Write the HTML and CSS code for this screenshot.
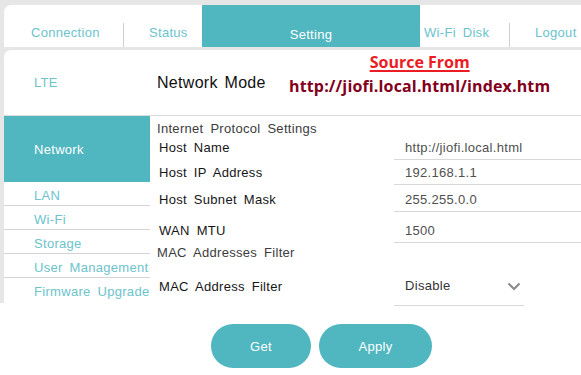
FILE: index.html
```html
<!DOCTYPE html>
<html>
<head>
	<title>JioFi - Network Settings</title>
<link rel="stylesheet" href="styles.css">
</head>
<body>

<div class="top">
	<ul class="nav">
		<li class="nav-conn">Connection</li>
		<li class="sep"></li>
		<li class="nav-status">Status</li>
		<li class="nav-setting">Setting</li>
		<li class="nav-disk">Wi-Fi Disk</li>
		<li class="sep"></li>
		<li class="nav-logout">Logout</li>
	</ul>

	<div class="mode-row">
		<div class="side-head">LTE</div>
		<div class="mode-title">Network Mode</div>
		<div class="source">
			<div class="source-label">Source From</div>
			<div class="source-url">http://jiofi.local.html/index.htm</div>
		</div>
	</div>
</div>

<div class="main">
	<ul class="side">
		<li class="active">Network</li>
		<li>LAN</li>
		<li>Wi-Fi</li>
		<li>Storage</li>
		<li>User Management</li>
		<li class="last">Firmware Upgrade</li>
	</ul>

	<div class="form">
		<div class="group-title">Internet Protocol Settings</div>
		<div class="field">
			<span class="label">Host Name</span>
			<span class="value">http://jiofi.local.html</span>
		</div>
		<div class="field gap-5">
			<span class="label">Host IP Address</span>
			<span class="value">192.168.1.1</span>
		</div>
		<div class="field gap-7">
			<span class="label">Host Subnet Mask</span>
			<span class="value">255.255.0.0</span>
		</div>
		<div class="field gap-11">
			<span class="label">WAN MTU</span>
			<span class="value">1500</span>
		</div>

		<div class="group-title group-mac">MAC Addresses Filter</div>
		<div class="field gap-18">
			<span class="label">MAC Address Filter</span>
			<span class="value select">
				<span>Disable</span>
				<svg width="14" height="9" viewBox="0 0 14 9"><path d="M1.5 1.5 L7 7 L12.5 1.5" fill="none" stroke="#8c8c8c" stroke-width="2.2"/></svg>
			</span>
		</div>
	</div>
</div>

<div class="actions">
	<button class="btn btn-get">Get</button>
	<button class="btn btn-apply">Apply</button>
</div>

</body>
</html>
```

FILE: styles.css
```css
body {
	margin: 0;
	background-color: #ffffff;
	font-family: "Liberation Sans", Arial, sans-serif;
	font-size: 13px;
	letter-spacing: 0.3px;
	word-spacing: 3px;
	color: #1c1c1c;
}

ul {
	margin: 0;
	padding: 0;
	list-style: none;
}

.top {
	background-color: #e6e6e6;
	padding: 5px 0 0 4px;
}

/* top tabs */
.nav {
	display: flex;
	height: 42px;
	background-color: #ffffff;
	border-top-left-radius: 7px;
	color: #6cc3cc;
}
.nav li {
	padding-top: 20px;
	line-height: 16px;
	white-space: nowrap;
}
.nav .sep {
	align-self: flex-end;
	width: 1px;
	height: 24px;
	padding: 0;
	background-color: #cfcfcf;
}
.nav-conn {
	width: 92px;
	padding-left: 27px;
}
.nav-status {
	width: 53px;
	padding-left: 25px;
}
.nav-setting {
	width: 218px;
	padding-top: 22px !important;
	text-align: center;
	background-color: #50b6c0;
	color: #ffffff;
}
.nav-disk {
	width: 85px;
	padding-left: 4px;
}
.nav-logout {
	flex: 1;
	padding-left: 25px;
}

/* network mode header */
.mode-row {
	display: flex;
	align-items: center;
	height: 65px;
	margin-top: 3px;
	background-color: #ffffff;
	border-top-left-radius: 7px;
	border-bottom: 1px solid #dcdcdc;
}
.side-head {
	width: 116px;
	padding-left: 30px;
	line-height: 16px;
	color: #6cc3cc;
}
.mode-title {
	width: 132px;
	padding-left: 7px;
	font-size: 16px;
	line-height: 18px;
	color: #111111;
	word-spacing: 2px;
}
.source {
	align-self: flex-start;
	margin-top: 2px;
	text-align: center;
	font-family: "Open Sans", "DejaVu Sans", sans-serif;
	font-weight: bold;
	font-size: 16px;
	line-height: 20px;
	letter-spacing: 0;
	word-spacing: 0;
}
.source-label {
	color: #ec1c24;
	text-decoration: underline;
	text-decoration-thickness: 2px;
	text-underline-offset: 2px;
}
.source-url {
	margin-top: 4px;
	color: #82001c;
	letter-spacing: 0.15px;
}

/* left menu + form */
.main {
	display: flex;
	align-items: flex-start;
}

.side {
	width: 146px;
	border-left: 4px solid #e6e6e6;
	color: #6cc3cc;
}
.side li {
	padding: 6px 0 1px 30px;
	line-height: 16px;
	white-space: nowrap;
	border-bottom: 1px solid #d4d4d4;
}
.side li.active {
	display: flex;
	align-items: center;
	height: 65px;
	padding-top: 1px;
	padding-bottom: 0;
	border-bottom: none;
	background-color: #50b6c0;
	color: #ffffff;
}
.side li.last {
	padding-bottom: 3px;
	border-bottom: none;
}

.form {
	flex: 1;
	padding-left: 7px;
}
.group-title {
	padding-top: 5px;
	line-height: 16px;
	color: #3c3c3c;
}
.group-mac {
	padding-top: 2px;
}

.field {
	display: flex;
	padding-top: 3px;
	line-height: 16px;
}
.field.gap-5 { padding-top: 5px; }
.field.gap-7 { padding-top: 7px; }
.field.gap-11 { padding-top: 11px; }
.field.gap-18 { padding-top: 18px; }

.label {
	width: 235px;
	padding-left: 2px;
	color: #161616;
}
.value {
	flex: 1;
	padding: 0 0 3px 11px;
	border-bottom: 1px solid #d8d8d8;
	color: #505050;
}
.value.select {
	flex: none;
	display: flex;
	justify-content: space-between;
	align-items: center;
	width: 116px;
	margin-top: -1px;
	padding: 0 3px 11px 11px;
	color: #333333;
}

/* buttons */
.actions {
	display: flex;
	gap: 8px;
	padding: 18px 0 0 211px;
}
.btn {
	height: 44px;
	border: none;
	border-radius: 22px;
	background-color: #50b6c0;
	color: #ffffff;
	font-family: "Liberation Sans", Arial, sans-serif;
	font-size: 13px;
	letter-spacing: 0.3px;
}
.btn-get {
	width: 100px;
}
.btn-apply {
	width: 113px;
}
```
